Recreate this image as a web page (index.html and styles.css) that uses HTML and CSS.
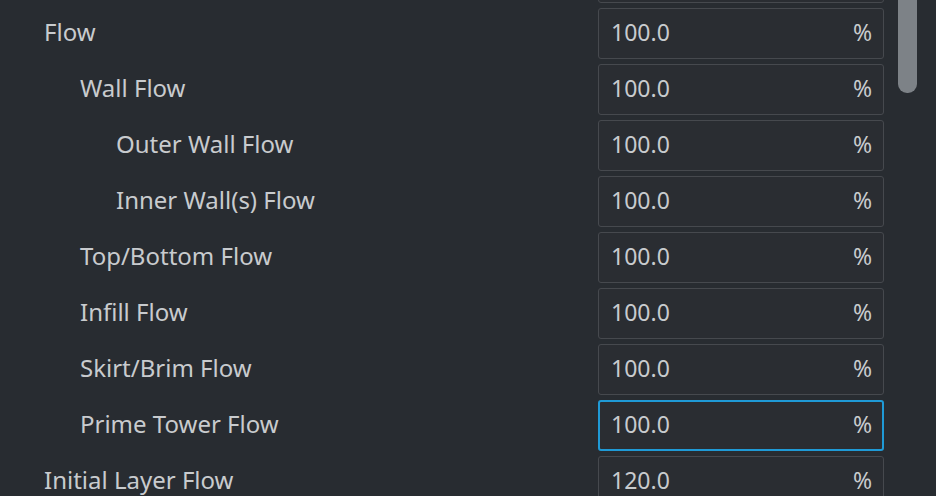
FILE: index.html
```html
<!DOCTYPE html>
<html lang="en">
<head>
    <meta charset="UTF-8">
    <title>Flow Settings</title>
    <link rel="stylesheet" href="styles.css">
</head>
<body>
    <div class="panel">
        <div class="settings">
            <div class="row">
                <span class="label"></span>
                <div class="field"></div>
            </div>
            <div class="row">
                <span class="label">Flow</span>
                <div class="field"><span class="value">100.0</span><span class="unit">%</span></div>
            </div>
            <div class="row level-1">
                <span class="label">Wall Flow</span>
                <div class="field"><span class="value">100.0</span><span class="unit">%</span></div>
            </div>
            <div class="row level-2">
                <span class="label">Outer Wall Flow</span>
                <div class="field"><span class="value">100.0</span><span class="unit">%</span></div>
            </div>
            <div class="row level-2">
                <span class="label">Inner Wall(s) Flow</span>
                <div class="field"><span class="value">100.0</span><span class="unit">%</span></div>
            </div>
            <div class="row level-1">
                <span class="label">Top/Bottom Flow</span>
                <div class="field"><span class="value">100.0</span><span class="unit">%</span></div>
            </div>
            <div class="row level-1">
                <span class="label">Infill Flow</span>
                <div class="field"><span class="value">100.0</span><span class="unit">%</span></div>
            </div>
            <div class="row level-1">
                <span class="label">Skirt/Brim Flow</span>
                <div class="field"><span class="value">100.0</span><span class="unit">%</span></div>
            </div>
            <div class="row level-1">
                <span class="label">Prime Tower Flow</span>
                <div class="field focused"><span class="value">100.0</span><span class="unit">%</span></div>
            </div>
            <div class="row">
                <span class="label">Initial Layer Flow</span>
                <div class="field"><span class="value">120.0</span><span class="unit">%</span></div>
            </div>
        </div>
        <div class="scrollbar">
            <div class="thumb"></div>
        </div>
    </div>
</body>
</html>
```

FILE: styles.css
```css
body {
    margin: 0;
    background-color: #282c31;
    font-family: "Noto Sans", sans-serif;
    color: #c8cbce;
    overflow: hidden;
}

.panel {
    display: flex;
    height: 496px;
    overflow: hidden;
}

.settings {
    margin-top: -51px;
    width: 884px;
    flex-shrink: 0;
}

.row {
    display: flex;
    align-items: center;
    justify-content: space-between;
    height: 56px;
    padding-left: 44px;
}

.row.level-1 {
    padding-left: 80px;
}

.row.level-2 {
    padding-left: 116px;
}

.label {
    font-size: 24px;
    padding-bottom: 4px;
}

.field {
    display: flex;
    align-items: center;
    justify-content: space-between;
    box-sizing: border-box;
    width: 286px;
    height: 51px;
    padding: 0 11px 0 12px;
    font-size: 23px;
    background-color: #2a2d32;
    border: 1px solid #46494e;
    border-radius: 3px;
}

.field span {
    padding-bottom: 2px;
}

.field.focused {
    border: 2px solid #1f9ad6;
    padding: 0 10px 0 11px;
}

.scrollbar {
    width: 19px;
    margin-left: 14px;
}

.thumb {
    margin-top: -20px;
    height: 113px;
    background-color: #7d8287;
    border-radius: 9px;
}
```
